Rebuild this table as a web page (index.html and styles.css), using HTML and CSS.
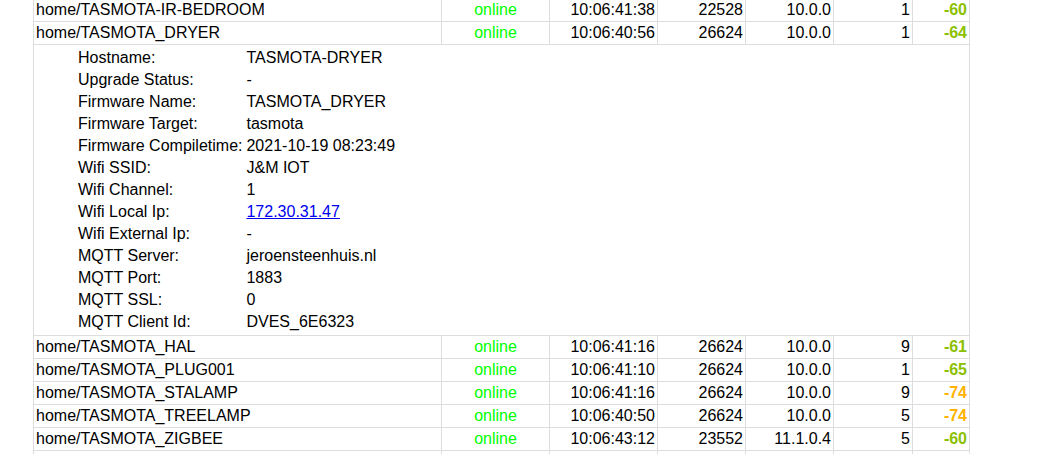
FILE: index.html
```html
<!DOCTYPE html>
<html>
<head>
<meta charset="utf-8">
<link rel="stylesheet" href="styles.css">
</head>
<body>
<div class="page">
<table class="devices">
  <colgroup>
    <col class="c-name"><col class="c-status"><col class="c-time"><col class="c-mem"><col class="c-ver"><col class="c-ch"><col class="c-rssi">
  </colgroup>
  <tbody>
    <tr>
      <td>home/TASMOTA-IR-BEDROOM</td><td class="status">online</td><td class="num">10:06:41:38</td><td class="num">22528</td><td class="num">10.0.0</td><td class="num">1</td><td class="num rssi good">-60</td>
    </tr>
    <tr>
      <td>home/TASMOTA_DRYER</td><td class="status">online</td><td class="num">10:06:40:56</td><td class="num">26624</td><td class="num">10.0.0</td><td class="num">1</td><td class="num rssi good">-64</td>
    </tr>
    <tr class="detail-row">
      <td colspan="7" class="detail-cell">
        <table class="details">
          <tr><td>Hostname:</td><td>TASMOTA-DRYER</td></tr>
          <tr><td>Upgrade Status:</td><td>-</td></tr>
          <tr><td>Firmware Name:</td><td>TASMOTA_DRYER</td></tr>
          <tr><td>Firmware Target:</td><td>tasmota</td></tr>
          <tr><td>Firmware Compiletime:</td><td>2021-10-19 08:23:49</td></tr>
          <tr><td>Wifi SSID:</td><td>J&amp;M IOT</td></tr>
          <tr><td>Wifi Channel:</td><td>1</td></tr>
          <tr><td>Wifi Local Ip:</td><td><a href="#">172.30.31.47</a></td></tr>
          <tr><td>Wifi External Ip:</td><td>-</td></tr>
          <tr><td>MQTT Server:</td><td>jeroensteenhuis.nl</td></tr>
          <tr><td>MQTT Port:</td><td>1883</td></tr>
          <tr><td>MQTT SSL:</td><td>0</td></tr>
          <tr><td>MQTT Client Id:</td><td>DVES_6E6323</td></tr>
        </table>
      </td>
    </tr>
    <tr>
      <td>home/TASMOTA_HAL</td><td class="status">online</td><td class="num">10:06:41:16</td><td class="num">26624</td><td class="num">10.0.0</td><td class="num">9</td><td class="num rssi good">-61</td>
    </tr>
    <tr>
      <td>home/TASMOTA_PLUG001</td><td class="status">online</td><td class="num">10:06:41:10</td><td class="num">26624</td><td class="num">10.0.0</td><td class="num">1</td><td class="num rssi good">-65</td>
    </tr>
    <tr>
      <td>home/TASMOTA_STALAMP</td><td class="status">online</td><td class="num">10:06:41:16</td><td class="num">26624</td><td class="num">10.0.0</td><td class="num">9</td><td class="num rssi warn">-74</td>
    </tr>
    <tr>
      <td>home/TASMOTA_TREELAMP</td><td class="status">online</td><td class="num">10:06:40:50</td><td class="num">26624</td><td class="num">10.0.0</td><td class="num">5</td><td class="num rssi warn">-74</td>
    </tr>
    <tr>
      <td>home/TASMOTA_ZIGBEE</td><td class="status">online</td><td class="num">10:06:43:12</td><td class="num">23552</td><td class="num">11.1.0.4</td><td class="num">5</td><td class="num rssi good">-60</td>
    </tr>
    <tr>
      <td>&nbsp;</td><td class="status">&nbsp;</td><td class="num">&nbsp;</td><td class="num">&nbsp;</td><td class="num">&nbsp;</td><td class="num">&nbsp;</td><td class="num">&nbsp;</td>
    </tr>
  </tbody>
</table>
</div>
</body>
</html>
```

FILE: styles.css
```css
html {
  overflow: hidden;
}
body {
  margin: 0;
  background: #ffffff;
  font-family: "Liberation Sans", Arial, sans-serif;
  font-size: 16px;
  color: #000000;
}
.page {
  padding-left: 33px;
  margin-top: -2px;
}
.devices {
  border-collapse: collapse;
  table-layout: fixed;
  width: 937px;
}
.devices > tbody > tr > td {
  border: 1px solid #dddddd;
  padding: 2px 2px;
  line-height: 18px;
  white-space: nowrap;
  overflow: hidden;
}
.c-name { width: 408px; }
.c-status { width: 108px; }
.c-time { width: 108px; }
.c-mem { width: 88px; }
.c-ver { width: 88px; }
.c-ch { width: 79px; }
.c-rssi { width: 57px; }
.status {
  text-align: center;
  color: #00ff00;
}
.num {
  text-align: right;
}
.rssi {
  font-weight: bold;
}
.good {
  color: #8bc000;
}
.warn {
  color: #ffb300;
}
.devices > tbody > tr > td.detail-cell {
  padding: 2px 2px;
}
.details {
  border-collapse: collapse;
  margin-left: 40px;
}
.details td {
  padding: 2px 2px;
  line-height: 18px;
  border: none;
  white-space: nowrap;
}
.details a {
  color: #0000ee;
  text-decoration: underline;
}
```
